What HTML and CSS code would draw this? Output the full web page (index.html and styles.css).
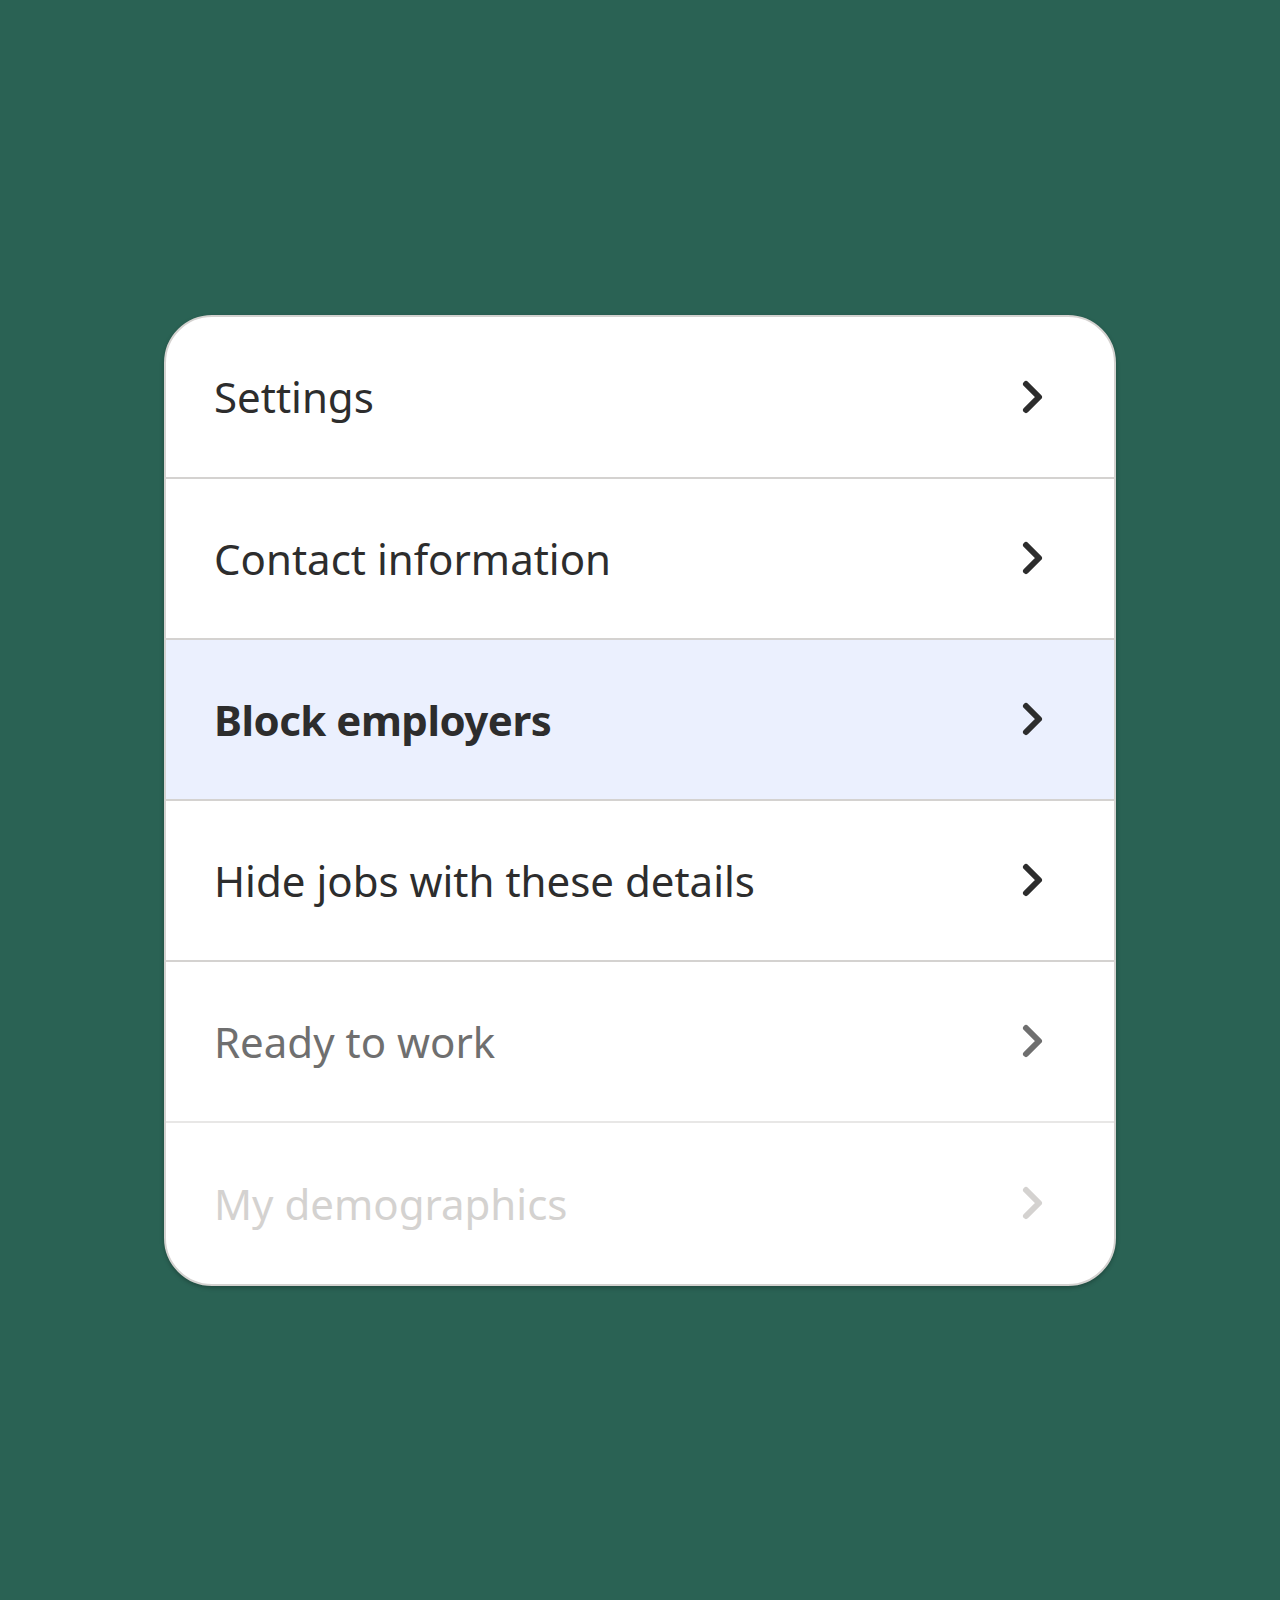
FILE: index.html
```html
<!DOCTYPE html>
<html>

    <head>
        <title>Profile menu</title>
        <link rel="stylesheet" href="styles.css">
    </head>

    <body>
        <!-- Menu card with profile links -->
        <nav class="menu-card">
            <a class="menu-row" href="#">
                <span class="menu-label">Settings</span>
                <svg class="chevron" viewBox="0 0 24 36" width="24" height="36"><path d="M5 5 L18 18 L5 31"/></svg>
            </a>
            <a class="menu-row" href="#">
                <span class="menu-label">Contact information</span>
                <svg class="chevron" viewBox="0 0 24 36" width="24" height="36"><path d="M5 5 L18 18 L5 31"/></svg>
            </a>
            <a class="menu-row active" href="#">
                <span class="menu-label">Block employers</span>
                <svg class="chevron" viewBox="0 0 24 36" width="24" height="36"><path d="M5 5 L18 18 L5 31"/></svg>
            </a>
            <a class="menu-row" href="#">
                <span class="menu-label">Hide jobs with these details</span>
                <svg class="chevron" viewBox="0 0 24 36" width="24" height="36"><path d="M5 5 L18 18 L5 31"/></svg>
            </a>
            <a class="menu-row muted" href="#">
                <span class="menu-label">Ready to work</span>
                <svg class="chevron" viewBox="0 0 24 36" width="24" height="36"><path d="M5 5 L18 18 L5 31"/></svg>
            </a>
            <a class="menu-row faded" href="#">
                <span class="menu-label">My demographics</span>
                <svg class="chevron" viewBox="0 0 24 36" width="24" height="36"><path d="M5 5 L18 18 L5 31"/></svg>
            </a>
        </nav>
    </body>

</html>
```

FILE: styles.css
```css
body {
    margin: 0;
    min-height: 1600px;
    background-color: #2a6254;
    font-family: "Noto Sans", sans-serif;
    display: flex;
    align-items: center;
    justify-content: center;
}

.menu-card {
    width: 948px;
    background-color: #fff;
    border: 2px solid #d4d2d0;
    border-radius: 48px;
    box-shadow: 0 2px 4px rgba(0, 0, 0, 0.25);
    overflow: hidden;
}

.menu-row {
    display: flex;
    align-items: center;
    justify-content: space-between;
    height: 159px;
    padding: 0 69px 0 48px;
    border-bottom: 2px solid #d4d2d0;
    color: #2d2d2d;
    text-decoration: none;
}

.menu-row:first-child {
    height: 160px;
}

.menu-row:last-child {
    height: 161px;
    border-bottom: none;
}

.menu-label {
    font-size: 42px;
}

.chevron {
    fill: none;
    stroke: currentColor;
    stroke-width: 6;
    stroke-linecap: round;
    stroke-linejoin: round;
}

.active {
    background-color: #ebf0fe;
}

.active .menu-label {
    font-weight: 700;
    letter-spacing: -0.5px;
}

.muted {
    color: #6f6f6f;
    border-bottom-color: #e8e7e6;
}

.faded {
    color: #d4d2d0;
}
```
